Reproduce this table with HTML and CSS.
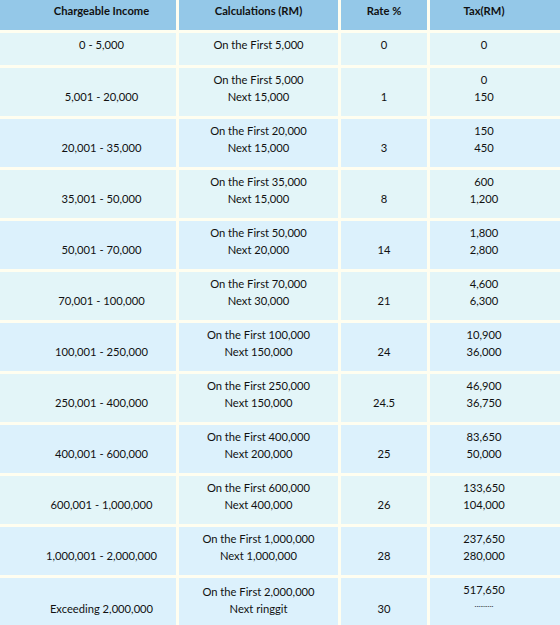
FILE: index.html
```html
<!DOCTYPE html>
<html lang="en">

<head>
  <meta charset="UTF-8">
  <meta name="viewport" content="width=device-width, initial-scale=1.0">
  <title>Income Tax Rates</title>
  <link rel="stylesheet" href="styles.css">
</head>

<body>
  <table class="tabela-imposto">
    <thead>
      <tr>
        <th class="col-renda">Chargeable Income</th>
        <th class="col-calc">Calculations (RM)</th>
        <th class="col-taxa">Rate %</th>
        <th class="col-imposto">Tax(RM)</th>
      </tr>
    </thead>
    <tbody>
      <tr class="ciano simples">
        <td class="col-renda">0 - 5,000</td>
        <td>On the First 5,000</td>
        <td>0</td>
        <td class="col-imposto">0</td>
      </tr>
      <tr class="ciano">
        <td class="col-renda">5,001 - 20,000</td>
        <td>On the First 5,000<br>Next 15,000</td>
        <td>1</td>
        <td class="col-imposto">0<br>150</td>
      </tr>
      <tr class="azul">
        <td class="col-renda">20,001 - 35,000</td>
        <td>On the First 20,000<br>Next 15,000</td>
        <td>3</td>
        <td class="col-imposto">150<br>450</td>
      </tr>
      <tr class="ciano">
        <td class="col-renda">35,001 - 50,000</td>
        <td>On the First 35,000<br>Next 15,000</td>
        <td>8</td>
        <td class="col-imposto">600<br>1,200</td>
      </tr>
      <tr class="azul">
        <td class="col-renda">50,001 - 70,000</td>
        <td>On the First 50,000<br>Next 20,000</td>
        <td>14</td>
        <td class="col-imposto">1,800<br>2,800</td>
      </tr>
      <tr class="ciano">
        <td class="col-renda">70,001 - 100,000</td>
        <td>On the First 70,000<br>Next 30,000</td>
        <td>21</td>
        <td class="col-imposto">4,600<br>6,300</td>
      </tr>
      <tr class="azul">
        <td class="col-renda">100,001 - 250,000</td>
        <td>On the First 100,000<br>Next 150,000</td>
        <td>24</td>
        <td class="col-imposto">10,900<br>36,000</td>
      </tr>
      <tr class="ciano">
        <td class="col-renda">250,001 - 400,000</td>
        <td>On the First 250,000<br>Next 150,000</td>
        <td>24.5</td>
        <td class="col-imposto">46,900<br>36,750</td>
      </tr>
      <tr class="azul">
        <td class="col-renda">400,001 - 600,000</td>
        <td>On the First 400,000<br>Next 200,000</td>
        <td>25</td>
        <td class="col-imposto">83,650<br>50,000</td>
      </tr>
      <tr class="ciano">
        <td class="col-renda">600,001 - 1,000,000</td>
        <td>On the First 600,000<br>Next 400,000</td>
        <td>26</td>
        <td class="col-imposto">133,650<br>104,000</td>
      </tr>
      <tr class="azul">
        <td class="col-renda">1,000,001 - 2,000,000</td>
        <td>On the First 1,000,000<br>Next 1,000,000</td>
        <td>28</td>
        <td class="col-imposto">237,650<br>280,000</td>
      </tr>
      <tr class="azul">
        <td class="col-renda">Exceeding 2,000,000</td>
        <td>On the First 2,000,000<br>Next ringgit</td>
        <td>30</td>
        <td class="col-imposto">517,650<br><span class="pontos">..........</span></td>
      </tr>
    </tbody>
  </table>
</body>

</html>
```

FILE: styles.css
```css
/* Página sem margem, a tabela encosta nas bordas */
body {
  margin: 0;
  background-color: #fffef0;
  font-family: Lato, "Open Sans", sans-serif;
  font-size: 11.2px;
  color: #111;
}

.tabela-imposto {
  width: 560px;
  border-collapse: separate;
  border-spacing: 0;
  table-layout: fixed;
}

.tabela-imposto th,
.tabela-imposto td {
  border-right: 3px solid #fffef0;
  border-bottom: 3px solid #fffef0;
  text-align: center;
  line-height: 17px;
  padding: 3px 0 11px;
}

/* Larguras das colunas (com a borda) */
.col-renda {
  width: 149px;
  padding-left: 27px !important;
}

.col-calc {
  width: 159px;
}

.col-taxa {
  width: 86px;
}

.col-imposto {
  width: 108px;
  padding-right: 25px !important;
  border-right: none !important;
}

/* Cabeçalho azul */
.tabela-imposto th {
  background-color: #94c8e8;
  font-weight: bold;
  padding: 2px 0 11px;
}

.ciano td {
  background-color: #e3f5f8;
}

.azul td {
  background-color: #dcf1fc;
}

/* Renda e taxa ficam na segunda linha */
.tabela-imposto tbody td {
  vertical-align: bottom;
}

.simples td {
  vertical-align: top;
  padding-bottom: 12px;
}

.pontos {
  font-size: 8px;
  position: relative;
  top: -4px;
}
```
